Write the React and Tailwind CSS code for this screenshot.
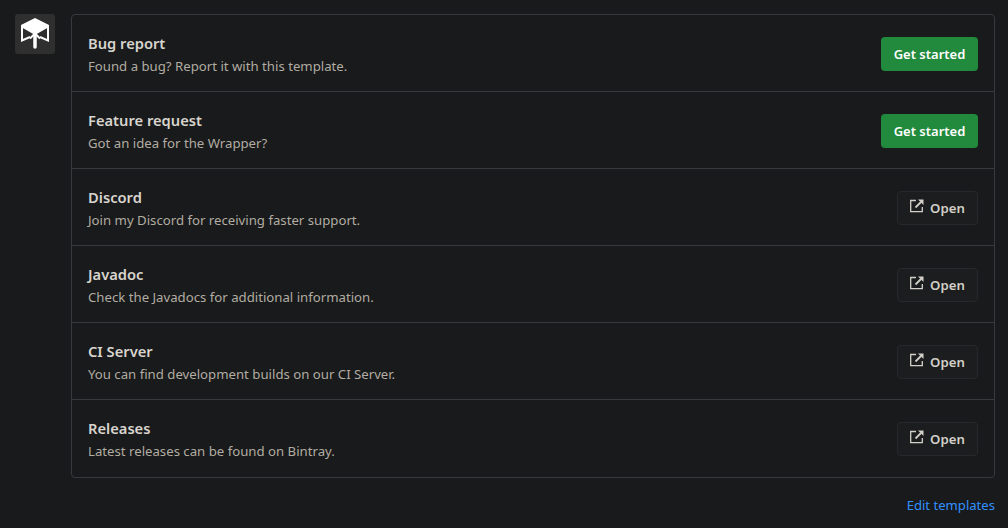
const rows = [
  ["Bug report", "Found a bug? Report it with this template.", true],
  ["Feature request", "Got an idea for the Wrapper?", true],
  ["Discord", "Join my Discord for receiving faster support.", false],
  ["Javadoc", "Check the Javadocs for additional information.", false],
  ["CI Server", "You can find development builds on our CI Server.", false],
  ["Releases", "Latest releases can be found on Bintray.", false],
];

function Logo() {
  return (
    <svg width="40" height="40" viewBox="0 0 40 40" fill="none">
      <path d="M20 4 L34 11 V13 L20 21 L6 13 V11 Z" fill="#fff" />
      <path d="M7 13 V26.5 L15 23" stroke="#fff" strokeWidth="2" />
      <path d="M33 13 V26.5 L25 23" stroke="#fff" strokeWidth="2" />
      <path d="M20 33 V20" stroke="#fff" strokeWidth="3.5" strokeLinecap="round" />
      <path d="M15 24.5 L20 19.5 L25 24.5" stroke="#fff" strokeWidth="2" />
    </svg>
  );
}

function ExternalIcon() {
  return (
    <svg width="14" height="14" viewBox="0 0 14 14" fill="none" className="mb-[4px]">
      <path d="M6 1.5 H0.7 V12.7 H12.3 V8" stroke="#d3cfc9" strokeWidth="1.3" />
      <path d="M8 0.5 H13.5 V6 Z" fill="#d3cfc9" />
      <path d="M11 3 L5.5 8.5" stroke="#d3cfc9" strokeWidth="1.8" />
    </svg>
  );
}

export default function App() {
  return (
    <div
      className="w-[1008px] h-[528px] overflow-hidden bg-[#181a1b] pt-[14px] pl-[15px] pr-[13px] flex gap-4"
      style={{ fontFamily: '"Noto Sans", "Open Sans", sans-serif' }}
    >
      <div className="w-10 h-10 shrink-0 rounded-[3px] bg-[#2f2f2f]">
        <Logo />
      </div>
      <div className="flex-1 min-w-0">
        <div className="border border-[#363a3d] rounded-[4px]">
          {rows.map(([title, desc, primary], i) => (
            <div
              key={title}
              className={`pl-4 pr-4 pt-[2px] flex items-center justify-between ${i === 0 ? "h-[76px]" : i === 5 ? "h-[78px] pb-[1px] border-t border-[#363a3d]" : "h-[77px] border-t border-[#363a3d]"}`}
            >
              <div className="pt-[1px]">
                <div className="text-[14.7px] leading-[22px] font-semibold text-[#d8d4ce]">{title}</div>
                <div className="text-[13.2px] leading-[22px] text-[#b2aca2] mt-[1px]">{desc}</div>
              </div>
              {primary ? (
                <button className="w-[97px] h-[34px] rounded-[4px] bg-[#228a3d] text-white text-[13px] font-semibold pt-[2px]">
                  Get started
                </button>
              ) : (
                <button className="w-[81px] h-[34px] rounded-[4px] border border-[#26292b] bg-[#1b1d1e] text-[#d3cfc9] text-[13.2px] font-semibold flex items-center justify-center gap-[6px]">
                  <ExternalIcon />
                  <span className="pt-[2px]">Open</span>
                </button>
              )}
            </div>
          ))}
        </div>
        <div className="mt-[17px] text-right text-[13.1px] leading-[20px] text-[#3391ff]">Edit templates</div>
      </div>
    </div>
  );
}
